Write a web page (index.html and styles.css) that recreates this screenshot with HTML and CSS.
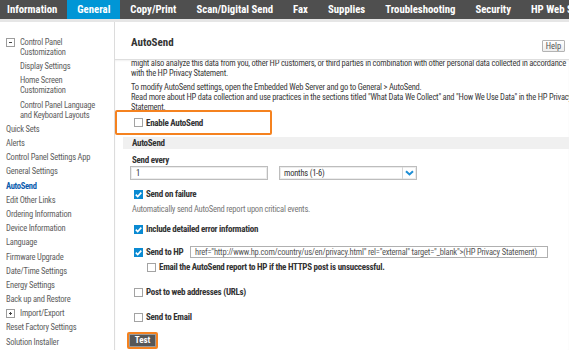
FILE: index.html
```html
<!DOCTYPE html>
<html>
<head>
<meta charset="utf-8">
<title>AutoSend</title>
<link rel="stylesheet" href="styles.css">
</head>
<body>
<nav class="nav">
  <span class="tab first">Information</span>
  <span class="tab active">General</span>
  <span class="tab">Copy/Print</span>
  <span class="tab">Scan/Digital Send</span>
  <span class="tab">Fax</span>
  <span class="tab">Supplies</span>
  <span class="tab">Troubleshooting</span>
  <span class="tab">Security</span>
  <span class="tab">HP Web Services</span>
</nav>
<div class="navline"></div>
<div class="layout">
  <aside class="side">
    <div class="item"><span class="tog"></span><span>Control Panel<br>Customization</span></div>
    <div class="item sub">Display Settings</div>
    <div class="item sub">Home Screen<br>Customization</div>
    <div class="item sub">Control Panel Language<br>and Keyboard Layouts</div>
    <div class="item">Quick Sets</div>
    <div class="item">Alerts</div>
    <div class="item">Control Panel Settings App</div>
    <div class="item">General Settings</div>
    <div class="item active">AutoSend</div>
    <div class="item">Edit Other Links</div>
    <div class="item">Ordering Information</div>
    <div class="item">Device Information</div>
    <div class="item">Language</div>
    <div class="item">Firmware Upgrade</div>
    <div class="item">Date/Time Settings</div>
    <div class="item">Energy Settings</div>
    <div class="item">Back up and Restore</div>
    <div class="item"><span class="tog plus"></span><span>Import/Export</span></div>
    <div class="item">Reset Factory Settings</div>
    <div class="item">Solution Installer</div>
  </aside>
  <main class="main">
    <header class="head">
      <h1 class="title">AutoSend</h1>
      <span class="help">Help</span>
    </header>
    <div class="scroll">
      <div class="content">
        <p class="para">might also analyze this data from you, other HP customers, or third parties in combination with other personal data collected in accordance<br>with the HP Privacy Statement.</p>
        <p class="para tight">To modify AutoSend settings, open the Embedded Web Server and go to General &gt; AutoSend.</p>
        <p class="para tight">Read more about HP data collection and use practices in the sections titled "What Data We Collect" and "How We Use Data" in the HP Privacy<br>Statement.</p>

        <div class="enable"><span class="cb"></span><span class="lbl-b">Enable AutoSend</span></div>

        <div class="band">AutoSend</div>

        <div class="flabel">Send every</div>
        <div class="fields">
          <div class="field">1</div>
          <div class="select">
            <span class="sval">months (1-6)</span>
            <span class="arrow"><svg width="9" height="6" viewBox="0 0 9 6"><polyline points="1,1.2 4.5,4.5 8,1.2" fill="none" stroke="#1e8fd6" stroke-width="2"/></svg></span>
          </div>
        </div>

        <div class="row r-fail"><span class="cb on"><svg width="9" height="9" viewBox="0 0 9 9"><polyline points="1.8,4.6 3.7,6.5 7.3,2.6" fill="none" stroke="#fff" stroke-width="1.6"/></svg></span><span>Send on failure</span></div>
        <div class="note">Automatically send AutoSend report upon critical events.</div>

        <div class="row r-inc"><span class="cb on"><svg width="9" height="9" viewBox="0 0 9 9"><polyline points="1.8,4.6 3.7,6.5 7.3,2.6" fill="none" stroke="#fff" stroke-width="1.6"/></svg></span><span>Include detailed error information</span></div>

        <div class="row r-hp"><span class="cb on"><svg width="9" height="9" viewBox="0 0 9 9"><polyline points="1.8,4.6 3.7,6.5 7.3,2.6" fill="none" stroke="#fff" stroke-width="1.6"/></svg></span><span class="hp-lbl">Send to HP</span><div class="url">href="http://www.hp.com/country/us/en/privacy.html" rel="external" target="_blank"&gt;(HP Privacy Statement)</div></div>
        <div class="row r-email"><span class="cb"></span><span>Email the AutoSend report to HP if the HTTPS post is unsuccessful.</span></div>

        <div class="row r-post"><span class="cb"></span><span>Post to web addresses (URLs)</span></div>
        <div class="row r-mail"><span class="cb"></span><span>Send to Email</span></div>

        <div class="testwrap"><span class="testbtn">Test</span></div>
      </div>
    </div>
  </main>
</div>
</body>
</html>
```
FILE: styles.css
```css
html, body {
  margin: 0;
  padding: 0;
}
body {
  width: 569px;
  height: 350px;
  overflow: hidden;
  background: #fff;
  font-family: "Roboto Condensed", "Liberation Sans", sans-serif;
  font-size: 8.5px;
  letter-spacing: -0.22px;
  color: #333;
}

/* top navigation */
.nav {
  display: flex;
  height: 19px;
  background: #4f4f4f;
  white-space: nowrap;
  overflow: hidden;
}
.tab {
  padding: 0 10px;
  line-height: 19px;
  color: #fff;
  font-weight: 700;
  font-size: 10.75px;
  letter-spacing: 0;
  flex: none;
}
.tab.first { padding-left: 7px; }
.tab.active { background: #0096d6; }
.navline {
  height: 3px;
  background: #e6e6e6;
}

.layout {
  display: flex;
  height: 328px;
}

/* sidebar */
.side {
  width: 114px;
  flex: none;
  border-right: 1px solid #dcdcdc;
  padding-top: 13px;
  color: #5e5e5e;
}
.item {
  display: flex;
  align-items: flex-start;
  padding: 2.1px 0 2.1px 6px;
  line-height: 10px;
  white-space: nowrap;
}
.item.sub { padding-left: 20px; }
.item.active {
  color: #0b5cad;
  font-weight: 700;
  letter-spacing: -0.3px;
}
.tog {
  position: relative;
  flex: none;
  width: 9px;
  height: 9px;
  box-sizing: border-box;
  border: 1px solid #9c9c9c;
  margin: 0.5px 5px 0 0;
  background: #fff;
}
.tog::before {
  content: "";
  position: absolute;
  left: 2px;
  top: 3px;
  width: 3px;
  height: 1px;
  background: #444;
}
.tog.plus::after {
  content: "";
  position: absolute;
  left: 3px;
  top: 2px;
  width: 1px;
  height: 3px;
  background: #444;
}

/* main */
.main {
  flex: 1;
  min-width: 0;
  overflow: hidden;
  display: flex;
  flex-direction: column;
}
.head {
  flex: none;
  height: 37px;
  box-sizing: border-box;
  display: flex;
  justify-content: space-between;
  align-items: flex-start;
  padding: 0 4px 0 16px;
}
.title {
  margin: 14px 0 0;
  font-size: 11px;
  line-height: 14px;
  font-weight: 700;
  letter-spacing: 0;
  color: #333;
}
.help {
  margin-top: 18px;
  width: 23px;
  height: 12px;
  box-sizing: border-box;
  border: 1px solid #b3b3b3;
  border-radius: 1px;
  background: linear-gradient(#ffffff, #ededed);
  color: #555;
  font-size: 8.5px;
  line-height: 10px;
  letter-spacing: 0;
  text-align: center;
}
.scroll {
  flex: 1;
  overflow: hidden;
  border-top: 1px solid #dedede;
  box-shadow: inset 0 1px 2px rgba(0, 0, 0, 0.06);
}
.content {
  margin-top: -2px;
  padding-left: 16px;
}
.para {
  margin: 0 0 4px;
  line-height: 10px;
  white-space: nowrap;
  color: #3a3a3a;
}
.para.tight { margin-bottom: 0; }

.enable {
  margin: -2px 0 0 -16px;
  width: 157px;
  height: 25px;
  box-sizing: border-box;
  border: 2px solid #f5821f;
  border-radius: 2px;
  display: flex;
  align-items: center;
  padding-left: 17px;
  font-size: 9px;
  font-weight: 700;
  letter-spacing: -0.27px;
  line-height: 10px;
}
.lbl-b { color: #333; }

.band {
  margin: 2px 0 0 -8px;
  height: 12px;
  line-height: 12px;
  background: #f0f0f0;
  padding-left: 9px;
  font-size: 9px;
  font-weight: 700;
  letter-spacing: -0.27px;
}

.flabel {
  margin-top: 6px;
  padding-left: 1px;
  line-height: 10px;
  font-size: 9px;
  font-weight: 700;
  letter-spacing: -0.27px;
}
.fields {
  display: flex;
  gap: 11px;
  margin: 1px 0 0 -1px;
}
.field {
  width: 138px;
  height: 14px;
  box-sizing: border-box;
  border: 1px solid #bdbdbd;
  box-shadow: inset 0 0 0 1px #ececec;
  padding-left: 5px;
  line-height: 12px;
}
.select {
  width: 138px;
  height: 14px;
  box-sizing: border-box;
  border: 1px solid #bdbdbd;
  box-shadow: inset 0 0 0 1px #ececec;
  display: flex;
}
.sval {
  flex: 1;
  padding-left: 4px;
  line-height: 12px;
}
.arrow {
  width: 13px;
  border-left: 1px solid #d6d6d6;
  display: flex;
  align-items: center;
  justify-content: center;
}

.row {
  display: flex;
  align-items: center;
  line-height: 10px;
  font-size: 9px;
  font-weight: 700;
  letter-spacing: -0.27px;
  padding-left: 3px;
  white-space: nowrap;
}
.cb {
  flex: none;
  width: 9px;
  height: 9px;
  box-sizing: border-box;
  border: 1px solid #a3a3a3;
  background: #fff;
  margin-right: 3px;
  display: flex;
}
.cb.on {
  border: none;
  background: #0a8ad2;
}
.r-fail { margin-top: 9px; }
.note {
  margin-top: 5px;
  line-height: 10px;
  color: #777;
  padding-left: 1px;
}
.r-inc { margin-top: 10px; }
.r-hp {
  margin-top: 12px;
  height: 12px;
}
.hp-lbl { width: 44px; }
.url {
  width: 358px;
  height: 12px;
  box-sizing: border-box;
  border: 1px solid #b0b0b0;
  padding-left: 4px;
  font-weight: 400;
  font-size: 8.5px;
  letter-spacing: -0.2px;
  line-height: 10px;
  color: #555;
  overflow: hidden;
  white-space: nowrap;
}
.r-email {
  margin-top: 4px;
  padding-left: 16px;
}
.r-post { margin-top: 15px; }
.r-mail { margin-top: 15px; }

.testwrap {
  margin: 10px 0 0 -4px;
  width: 31px;
  height: 17px;
  box-sizing: border-box;
  border: 2px solid #f5821f;
  border-radius: 2px;
}
.testbtn {
  display: block;
  height: 13px;
  box-sizing: border-box;
  border: 1px solid #9a9a9a;
  background: #575757;
  color: #fff;
  font-size: 9px;
  font-weight: 700;
  letter-spacing: 0;
  line-height: 11px;
  text-align: center;
}
```
